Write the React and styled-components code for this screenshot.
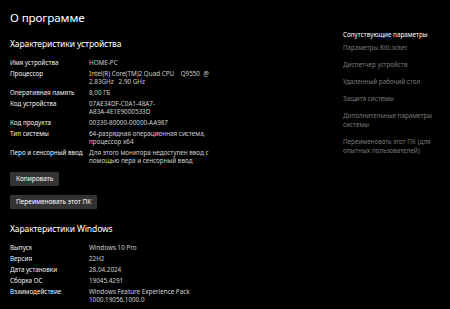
import React from 'react';
import styled, { createGlobalStyle } from 'styled-components';

const GlobalStyle = createGlobalStyle`
  html, body {
    margin: 0;
    padding: 0;
    background: #000;
  }
  body {
    font-family: 'Noto Sans', 'Open Sans', sans-serif;
    color: #fff;
  }
`;

const Page = styled.div`
  display: flex;
  width: 450px;
  height: 309px;
  overflow: hidden;
  background: #000;
  padding: 9px 0 0 10px;
  box-sizing: border-box;
`;

const Main = styled.div`
  width: 333px;
  flex-shrink: 0;
`;

const Title = styled.h1`
  margin: 0 0 11px;
  font-size: 11.6px;
  font-weight: 400;
  line-height: 17px;
  letter-spacing: -0.1px;
`;

const SectionTitle = styled.h2`
  margin: ${({ $top }) => $top}px 0 9px;
  font-size: 8.5px;
  font-weight: 400;
  line-height: 13px;
  letter-spacing: -0.1px;
`;

const Rows = styled.div`
  display: flex;
  flex-direction: column;
  gap: 3px;
`;

const Row = styled.div`
  display: grid;
  grid-template-columns: 79px 160px;
  font-size: 6.3px;
  line-height: 8px;
`;

const Label = styled.span`
  color: #f2f2f2;
`;

const Value = styled.span`
  color: #cfcfcf;
  white-space: pre-wrap;
`;

const Button = styled.button`
  display: block;
  margin-top: ${({ $top }) => $top}px;
  padding: 0 6px;
  height: 14px;
  border: none;
  border-radius: 1px;
  background: #333;
  color: #fff;
  font-family: inherit;
  font-size: 6.5px;
  line-height: 14px;
`;

const Aside = styled.aside`
  display: flex;
  flex-direction: column;
  padding-top: 21px;
  width: 100px;
  font-size: 6.3px;
  line-height: 9px;
`;

const AsideTitle = styled.div`
  color: #fff;
  margin-bottom: 4px;
`;

const AsideLink = styled.div`
  color: #7a7a7a;
  margin-bottom: 8px;
  white-space: pre-line;
`;

const device = [
  ['Имя устройства', 'HOME-PC'],
  ['Процессор', 'Intel(R) Core(TM)2 Quad CPU    Q9550  @\n2.83GHz   2.90 GHz'],
  ['Оперативная память', '8,00 ГБ'],
  ['Код устройства', '07AE34DF-C0A1-48A7-\nA83A-4E1E9000533D'],
  ['Код продукта', '00330-80000-00000-AA987'],
  ['Тип системы', '64-разрядная операционная система,\nпроцессор x64'],
  ['Перо и сенсорный ввод', 'Для этого монитора недоступен ввод с\nпомощью пера и сенсорный ввод'],
];

const windows = [
  ['Выпуск', 'Windows 10 Pro'],
  ['Версия', '22H2'],
  ['Дата установки', '28.04.2024'],
  ['Сборка ОС', '19045.4291'],
  ['Взаимодействие', 'Windows Feature Experience Pack\n1000.19056.1000.0'],
];

const related = [
  'Параметры BitLocker',
  'Диспетчер устройств',
  'Удаленный рабочий стол',
  'Защита системы',
  'Дополнительные параметры\nсистемы',
  'Переименовать этот ПК (для\nопытных пользователей)',
];

function InfoRows({ items }) {
  return (
    <Rows>
      {items.map(([label, value]) => (
        <Row key={label}>
          <Label>{label}</Label>
          <Value>{value}</Value>
        </Row>
      ))}
    </Rows>
  );
}

export default function App() {
  return (
    <Page>
      <GlobalStyle />
      <Main>
        <Title>О программе</Title>
        <SectionTitle $top={0}>Характеристики устройства</SectionTitle>
        <InfoRows items={device} />
        <Button $top={7}>Копировать</Button>
        <Button $top={9}>Переименовать этот ПК</Button>
        <SectionTitle $top={13}>Характеристики Windows</SectionTitle>
        <InfoRows items={windows} />
      </Main>
      <Aside>
        <AsideTitle>Сопутствующие параметры</AsideTitle>
        {related.map((text) => (
          <AsideLink key={text}>{text}</AsideLink>
        ))}
      </Aside>
    </Page>
  );
}
